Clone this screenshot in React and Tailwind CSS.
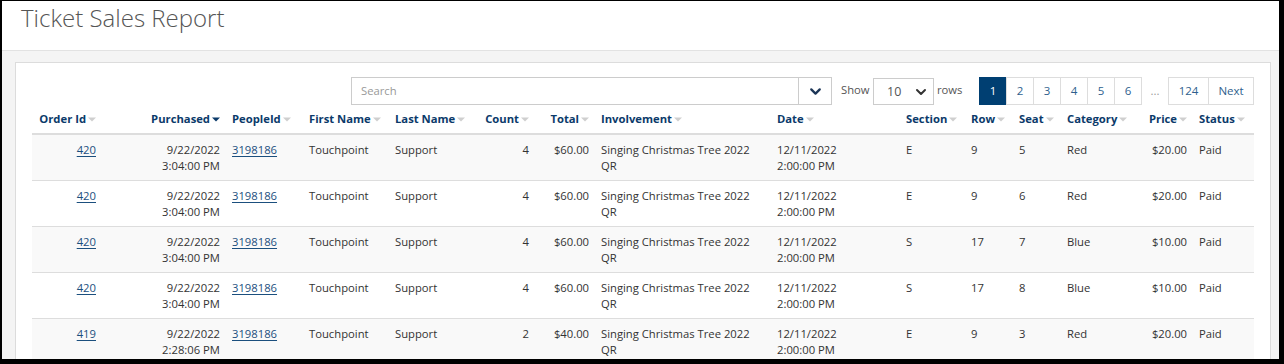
import React from "react";
import { ChevronDown } from "lucide-react";

const Arrow = ({ active }) => (
  <svg width="8" height="5" viewBox="0 0 8 5" className="ml-[2px] shrink-0">
    <path d="M0 0.5h8L4 4.5z" fill={active ? "#0b3a6a" : "#cfcfcf"} />
  </svg>
);

const cols = [
  { label: "Order Id", w: 70, align: "right" },
  { label: "Purchased", w: 124, align: "right", active: true },
  { label: "PeopleId", w: 77, align: "left" },
  { label: "First Name", w: 86, align: "left" },
  { label: "Last Name", w: 83, align: "left" },
  { label: "Count", w: 63, align: "right" },
  { label: "Total", w: 60, align: "right" },
  { label: "Involvement", w: 176, align: "left" },
  { label: "Date", w: 129, align: "left" },
  { label: "Section", w: 65, align: "left" },
  { label: "Row", w: 48, align: "left" },
  { label: "Seat", w: 48, align: "left" },
  { label: "Category", w: 79, align: "left" },
  { label: "Price", w: 53, align: "right" },
  { label: "Status", w: 61, align: "left" },
];

const rows = [
  { id: "420", time: "3:04:00 PM", count: "4", total: "$60.00", sec: "E", row: "9", seat: "5", cat: "Red", price: "$20.00" },
  { id: "420", time: "3:04:00 PM", count: "4", total: "$60.00", sec: "E", row: "9", seat: "6", cat: "Red", price: "$20.00" },
  { id: "420", time: "3:04:00 PM", count: "4", total: "$60.00", sec: "S", row: "17", seat: "7", cat: "Blue", price: "$10.00" },
  { id: "420", time: "3:04:00 PM", count: "4", total: "$60.00", sec: "S", row: "17", seat: "8", cat: "Blue", price: "$10.00" },
  { id: "419", time: "2:28:06 PM", count: "2", total: "$40.00", sec: "E", row: "9", seat: "3", cat: "Red", price: "$20.00" },
];

const linkCls = "text-[#1b4f7e] underline underline-offset-2";

export default function App() {
  const td = "px-[6px] pt-[7px] pb-[6px] align-top border-b border-[#dddddd] leading-[16px]";
  return (
    <div className="w-[1284px] h-[364px] bg-black pt-px pl-[2px] overflow-hidden font-['Open_Sans',sans-serif]">
      <div className="w-[1277px] h-[358px] bg-[#f4f4f4] overflow-hidden">
        <div className="h-[50px] bg-white border-b border-[#e2e2e2] pl-[19px]">
          <h1 className="text-[24px] font-light text-[#555555] leading-[33px]">Ticket Sales Report</h1>
        </div>
        <div className="mt-[11px] ml-[13px] w-[1256px] h-[400px] bg-white border border-[#dcdcdc] px-[16px] pt-[14px]">
          <div className="flex justify-end items-center h-[28px] text-[11.25px]">
            <div className="flex h-[28px] w-[481px]">
              <div className="flex-1 border border-[#cccccc] flex items-center pl-[9px] text-[#999999]">Search</div>
              <div className="w-[34px] -ml-px border border-[#cccccc] flex items-center justify-center">
                <ChevronDown size={17} strokeWidth={3.2} color="#1c3557" />
              </div>
            </div>
            <span className="ml-[9px] w-[32px] text-[#555555] -mt-[2px]">Show</span>
            <div className="mt-[1px] w-[61px] h-[27px] border border-[#cccccc] flex items-center justify-between pl-[13px] pr-[4px] text-[#555555] text-[12.5px]">
              <span className="mt-[2px]">10</span>
              <ChevronDown size={16} strokeWidth={3} color="#333333" />
            </div>
            <span className="ml-[3px] w-[42px] text-[#555555] -mt-[2px]">rows</span>
            <div className="flex h-[28px] text-[11.5px] text-[#2f5f8e]">
              <div className="w-[28px] h-[28px] bg-[#003f72] border border-[#003f72] text-white flex items-center justify-center">1</div>
              {["2", "3", "4", "5", "6"].map((p) => (
                <div key={p} className="w-[28px] h-[28px] -ml-px border border-[#dddddd] flex items-center justify-center">{p}</div>
              ))}
              <div className="w-[26px] h-[28px] flex items-center justify-center text-[#999999]">...</div>
              <div className="w-[41px] h-[28px] border border-[#dddddd] flex items-center justify-center">124</div>
              <div className="w-[46px] h-[28px] -ml-px border border-[#dddddd] flex items-center justify-center">Next</div>
            </div>
          </div>
          <table className="w-[1222px] table-fixed border-collapse text-[11.25px] text-[#333333]">
            <colgroup>
              {cols.map((c) => (
                <col key={c.label} style={{ width: c.w }} />
              ))}
            </colgroup>
            <thead>
              <tr>
                {cols.map((c) => (
                  <th
                    key={c.label}
                    className={`px-[6px] pt-[6px] pb-[6px] leading-[16px] font-bold text-[#0b3a6a] whitespace-nowrap border-b-2 border-[#dddddd] ${c.align === "right" ? "text-right" : "text-left"}`}
                  >
                    <span className="inline-flex items-center">
                      {c.label}
                      <Arrow active={c.active} />
                    </span>
                  </th>
                ))}
              </tr>
            </thead>
            <tbody>
              {rows.map((r, i) => (
                <tr key={i} className={i % 2 === 0 ? "bg-[#f9f9f9]" : "bg-white"}>
                  <td className={`${td} text-right`}><span className={linkCls}>{r.id}</span></td>
                  <td className={`${td} text-right`}>9/22/2022<br />{r.time}</td>
                  <td className={td}><span className={linkCls}>3198186</span></td>
                  <td className={td}>Touchpoint</td>
                  <td className={td}>Support</td>
                  <td className={`${td} text-right`}>{r.count}</td>
                  <td className={`${td} text-right`}>{r.total}</td>
                  <td className={`${td} whitespace-nowrap`}>Singing Christmas Tree 2022<br />QR</td>
                  <td className={td}>12/11/2022<br />2:00:00 PM</td>
                  <td className={td}>{r.sec}</td>
                  <td className={td}>{r.row}</td>
                  <td className={td}>{r.seat}</td>
                  <td className={td}>{r.cat}</td>
                  <td className={`${td} text-right`}>{r.price}</td>
                  <td className={td}>Paid</td>
                </tr>
              ))}
            </tbody>
          </table>
        </div>
      </div>
    </div>
  );
}
